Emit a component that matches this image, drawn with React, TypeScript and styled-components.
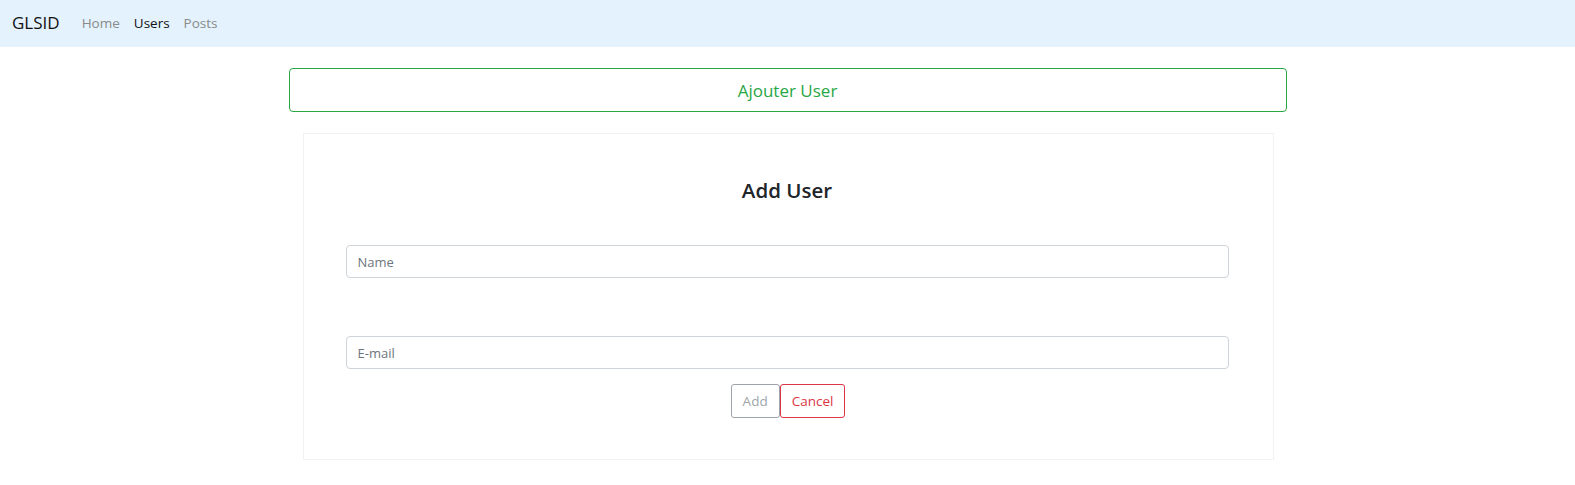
import React, { useState } from 'react';
import styled, { createGlobalStyle } from 'styled-components';

const GlobalStyle = createGlobalStyle`
  * { box-sizing: border-box; }
  body {
    margin: 0;
    font-family: "Open Sans", "Noto Sans", Arial, sans-serif;
    color: #212529;
    background: #fff;
  }
`;

export default function App() {
    const [name, setName] = useState('');
    const [email, setEmail] = useState('');

    return (
        <>
            <GlobalStyle/>
            <S.Navbar>
                <S.Brand>GLSID</S.Brand>
                <S.NavLinks>
                    <S.NavLink>Home</S.NavLink>
                    <S.NavLink active>Users</S.NavLink>
                    <S.NavLink>Posts</S.NavLink>
                </S.NavLinks>
            </S.Navbar>
            <S.Container>
                <S.ToggleButton>Ajouter User</S.ToggleButton>
                <S.Card>
                    <S.Title>Add User</S.Title>
                    <S.Form>
                        <S.Input placeholder='Name' value={name} onChange={e => setName(e.target.value)}/>
                        <S.Input placeholder='E-mail' value={email} onChange={e => setEmail(e.target.value)}/>
                    </S.Form>
                    <S.Actions>
                        <S.OutlineButton color='#6c757d' disabled>Add</S.OutlineButton>
                        <S.OutlineButton color='#dc3545'>Cancel</S.OutlineButton>
                    </S.Actions>
                </S.Card>
            </S.Container>
        </>
    );
}

const S = {
    Navbar: styled.nav`
      display: flex;
      align-items: center;
      height: 47px;
      padding: 0 12px 2px;
      background: #e3f2fd;
    `,
    Brand: styled.span`
      font-size: 17px;
      color: #111;
      margin-right: 22px;
    `,
    NavLinks: styled.div`
      display: flex;
      gap: 14px;
    `,
    NavLink: styled.a<{ active?: boolean }>`
      font-size: 13.5px;
      color: ${p => p.active ? '#111' : '#8a8a8a'};
      cursor: pointer;
    `,
    Container: styled.main`
      width: 998px;
      margin: 21px auto 0;
      display: flex;
      flex-direction: column;
      gap: 21px;
    `,
    ToggleButton: styled.button`
      height: 44px;
      width: 100%;
      background: #fff;
      border: 1px solid #28a745;
      border-radius: 4px;
      color: #28a745;
      font-family: inherit;
      font-size: 17px;
      cursor: pointer;
    `,
    Card: styled.section`
      margin: 0 13px 0 14px;
      height: 327px;
      border: 1px solid #f2f2f2;
      padding: 42px 44px 0 42px;
      display: flex;
      flex-direction: column;
    `,
    Title: styled.h3`
      margin: 0;
      text-align: center;
      font-size: 20.5px;
      font-weight: 600;
      line-height: 28px;
    `,
    Form: styled.div`
      display: flex;
      flex-direction: column;
      gap: 58px;
      margin-top: 41px;
    `,
    Input: styled.input`
      height: 33px;
      width: 100%;
      border: 1px solid #ced4da;
      border-radius: 4px;
      padding: 0 11px;
      font-family: inherit;
      font-size: 13px;
      color: #495057;
      &::placeholder { color: #6c757d; }
      &:focus { outline: none; border-color: #86b7fe; }
    `,
    Actions: styled.div`
      display: flex;
      justify-content: center;
      margin-top: 15px;
      padding-left: 2px;
    `,
    OutlineButton: styled.button<{ color: string }>`
      height: 34px;
      padding: 0 11px;
      background: #fff;
      border: 1px solid ${p => p.color};
      border-radius: 3px;
      color: ${p => p.color};
      font-family: inherit;
      font-size: 13.5px;
      cursor: pointer;
      &:disabled { opacity: .65; cursor: default; }
    `,
};
